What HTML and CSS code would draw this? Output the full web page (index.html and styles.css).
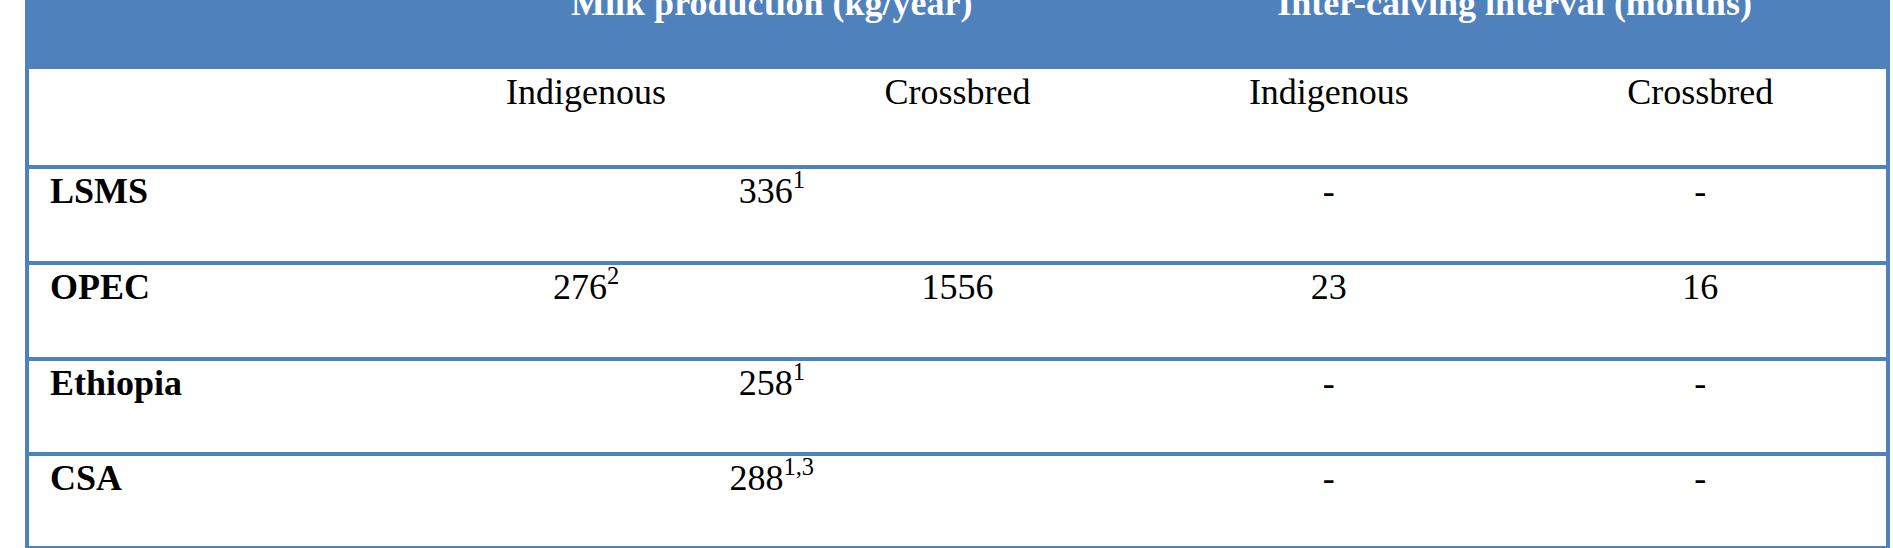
FILE: index.html
```html
<!DOCTYPE html>
<html lang="en">
<head>
<meta charset="utf-8">
<title>Milk production and inter-calving interval</title>
<link rel="stylesheet" href="styles.css">
</head>
<body>
<table class="data-table">
  <colgroup>
    <col class="col"><col class="col"><col class="col"><col class="col"><col class="col">
  </colgroup>
  <tr class="head-row">
    <td></td>
    <td colspan="2">Milk production (kg/year)</td>
    <td colspan="2">Inter-calving interval (months)</td>
  </tr>
  <tr class="sub-row">
    <td></td>
    <td>Indigenous</td>
    <td>Crossbred</td>
    <td>Indigenous</td>
    <td>Crossbred</td>
  </tr>
  <tr class="body-row">
    <td class="label">LSMS</td>
    <td colspan="2">336<span class="sup">1</span></td>
    <td>-</td>
    <td>-</td>
  </tr>
  <tr class="body-row">
    <td class="label">OPEC</td>
    <td>276<span class="sup">2</span></td>
    <td>1556</td>
    <td>23</td>
    <td>16</td>
  </tr>
  <tr class="body-row row-short">
    <td class="label">Ethiopia</td>
    <td colspan="2">258<span class="sup">1</span></td>
    <td>-</td>
    <td>-</td>
  </tr>
  <tr class="body-row row-last">
    <td class="label">CSA</td>
    <td colspan="2">288<span class="sup">1,3</span></td>
    <td>-</td>
    <td>-</td>
  </tr>
</table>
</body>
</html>
```
FILE: styles.css
```css
html, body {
  margin: 0;
  padding: 0;
  background: #ffffff;
}

body {
  font-family: "Liberation Serif", "Times New Roman", serif;
  font-size: 36px;
  color: #000000;
  overflow: hidden;
}

.data-table {
  box-sizing: border-box;
  width: 1865px;
  margin: -26px 0 0 25px;
  border-collapse: separate;
  border-spacing: 0;
  table-layout: fixed;
  border-left: 4px solid #4f81bd;
  border-right: 4px solid #4f81bd;
  border-bottom: 4px solid #4f81bd;
}

.col {
  width: 20%;
}

.data-table td {
  box-sizing: border-box;
  height: 96px;
  padding: 1px 0 0 0;
  vertical-align: top;
  text-align: center;
  white-space: nowrap;
  line-height: normal;
  border-top: 4px solid #4f81bd;
}

.head-row td {
  background: #4f81bd;
  color: #ffffff;
  font-weight: bold;
  border-top: 0;
  padding-top: 8px;
  height: 95px;
}

.sub-row td {
  border-top: 0;
  padding-top: 2px;
}

.data-table td.label {
  text-align: left;
  padding-left: 21px;
  font-weight: bold;
}

.row-short td {
  height: 95px;
}

.row-last td {
  height: 94px;
}

.sup {
  font-size: 0.68em;
  vertical-align: 0.62em;
  line-height: 0;
}
```
